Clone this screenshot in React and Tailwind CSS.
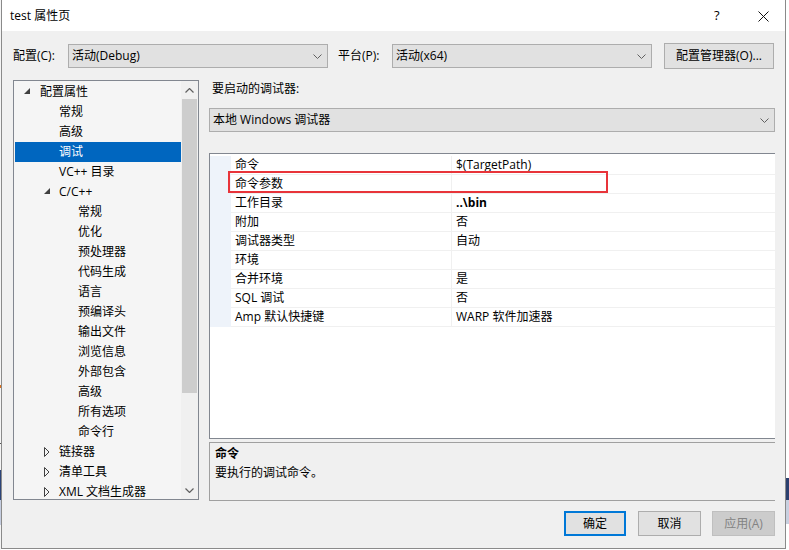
import React from "react";

const font = {
  fontFamily: '"Open Sans", "Noto Sans CJK SC", sans-serif',
};

const Chevron = ({ className = "" }) => (
  <svg width="9" height="5" viewBox="0 0 9 5" className={className}>
    <path d="M0.5 0.5 L4.5 4.5 L8.5 0.5" fill="none" stroke="#606060" strokeWidth="1" />
  </svg>
);

const Combo = ({ text, className = "" }) => (
  <div
    className={`h-[24px] bg-[#e1e1e1] border border-[#adadad] flex items-center pl-[3px] pr-[5px] ${className}`}
  >
    <span className="flex-1 text-[12px] leading-[22px] truncate">{text}</span>
    <Chevron />
  </div>
);

const Expanded = () => (
  <svg width="7" height="7" viewBox="0 0 7 7">
    <polygon points="6,0 6,6 0,6" fill="#404040" />
  </svg>
);

const Collapsed = () => (
  <svg width="6" height="10" viewBox="0 0 6 10">
    <polygon points="0.5,0.5 5,5 0.5,9.5" fill="none" stroke="#404040" strokeWidth="1" />
  </svg>
);

const treeItems = [
  { text: "配置属性", level: 0, arrow: "open" },
  { text: "常规", level: 1 },
  { text: "高级", level: 1 },
  { text: "调试", level: 1, selected: true },
  { text: "VC++ 目录", level: 1 },
  { text: "C/C++", level: 1, arrow: "open" },
  { text: "常规", level: 2 },
  { text: "优化", level: 2 },
  { text: "预处理器", level: 2 },
  { text: "代码生成", level: 2 },
  { text: "语言", level: 2 },
  { text: "预编译头", level: 2 },
  { text: "输出文件", level: 2 },
  { text: "浏览信息", level: 2 },
  { text: "外部包含", level: 2 },
  { text: "高级", level: 2 },
  { text: "所有选项", level: 2 },
  { text: "命令行", level: 2 },
  { text: "链接器", level: 1, arrow: "closed" },
  { text: "清单工具", level: 1, arrow: "closed" },
  { text: "XML 文档生成器", level: 1, arrow: "closed" },
];

const indent = ["pl-[25px]", "pl-[44px]", "pl-[63px]"];

const props = [
  ["命令", "$(TargetPath)"],
  ["命令参数", ""],
  ["工作目录", "..\\bin", true],
  ["附加", "否"],
  ["调试器类型", "自动"],
  ["环境", ""],
  ["合并环境", "是"],
  ["SQL 调试", "否"],
  ["Amp 默认快捷键", "WARP 软件加速器"],
];

function TreeRow({ item }) {
  return (
    <div
      className={`relative h-[20px] flex items-center text-[12px] leading-[20px] whitespace-nowrap ${indent[item.level]} ${
        item.selected ? "bg-[#0066bf] text-white" : "text-black"
      }`}
    >
      {item.arrow === "open" && (
        <span className={`absolute top-[6px] ${item.level === 0 ? "left-[9px]" : "left-[29px]"}`}>
          <Expanded />
        </span>
      )}
      {item.arrow === "closed" && (
        <span className="absolute top-[5px] left-[29px]">
          <Collapsed />
        </span>
      )}
      {item.text}
    </div>
  );
}

export default function App() {
  return (
    <div className="w-[789px] h-[550px] bg-white flex overflow-hidden text-black" style={font}>
      {/* desktop strip on the left */}
      <div className="w-[1px] h-full flex flex-col bg-[#f4f4f4]">
        <div className="h-[385px]" />
        <div className="h-[3px] bg-[#d9701e]" />
        <div className="h-[55px]" />
        <div className="h-[1px] bg-[#555]" />
        <div className="h-[26px]" />
        <div className="h-[30px] bg-[#2c4478]" />
        <div className="h-[25px] bg-[#c5cde0]" />
      </div>

      {/* dialog window */}
      <div className="w-[785px] h-[549px] border border-t-0 border-[#8a8a8a] flex flex-col bg-[#f0f0f0]">
        {/* title bar */}
        <div className="h-[31px] bg-white flex items-center relative">
          <span className="pl-[8px] text-[12px]">test 属性页</span>
          <span className="absolute left-[712px] top-[6px] text-[13px]">?</span>
          <svg className="absolute left-[756px] top-[11px]" width="11" height="11" viewBox="0 0 11 11">
            <path d="M0.5 0.5 L10.5 10.5 M10.5 0.5 L0.5 10.5" stroke="#111" strokeWidth="1" />
          </svg>
        </div>

        {/* configuration row */}
        <div className="mt-[12px] h-[26px] flex items-center pl-[11px] text-[12px]">
          <span className="w-[55px]">配置(C):</span>
          <Combo text="活动(Debug)" className="w-[260px]" />
          <span className="ml-[10px] w-[54px]">平台(P):</span>
          <Combo text="活动(x64)" className="w-[260px]" />
          <button className="ml-[12px] w-[110px] h-[26px] bg-[#e1e1e1] border border-[#adadad] text-[12px]">
            配置管理器(O)...
          </button>
        </div>

        {/* main area */}
        <div className="mt-[11px] flex pl-[11px]">
          {/* tree */}
          <div className="w-[186px] h-[420px] border border-[#828790] bg-[#f5f5f5] flex">
            <div className="w-[167px] pt-[1px] pl-[1px] overflow-hidden">
              {treeItems.map((item, i) => (
                <TreeRow key={i} item={item} />
              ))}
            </div>
            <div className="w-[17px] bg-[#f0f0f0] flex flex-col items-center">
              <div className="h-[18px] flex items-center justify-center">
                <svg width="9" height="5" viewBox="0 0 9 5">
                  <path d="M0.5 4.5 L4.5 0.5 L8.5 4.5" fill="none" stroke="#606060" strokeWidth="1.2" />
                </svg>
              </div>
              <div className="w-[15px] h-[294px] bg-[#cdcdcd]" />
              <div className="flex-1" />
              <div className="h-[18px] flex items-center justify-center">
                <svg width="9" height="5" viewBox="0 0 9 5">
                  <path d="M0.5 0.5 L4.5 4.5 L8.5 0.5" fill="none" stroke="#606060" strokeWidth="1.2" />
                </svg>
              </div>
            </div>
          </div>

          {/* right panel */}
          <div className="ml-[10px] w-[566px] flex flex-col">
            <div className="h-[18px] pl-[3px] text-[12px] leading-[18px]">要启动的调试器:</div>
            <Combo text="本地 Windows 调试器" className="mt-[10px] w-[566px]" />

            {/* property grid */}
            <div className="relative mt-[21px] h-[286px] border border-r-0 border-[#828790] bg-white pt-[2px]">
              {props.map(([name, value, bold], i) => (
                <div key={i} className="flex h-[19px] text-[12px] leading-[18px]">
                  <div className="w-[21px] bg-[#eef3fa]" />
                  <div className="flex-1 flex border-b border-[#f0f0f0]">
                    <div className="w-[221px] pl-[4px] border-r border-[#f0f0f0]">{name}</div>
                    <div className={`flex-1 pl-[4px] ${bold ? "font-bold" : ""}`}>{value}</div>
                  </div>
                </div>
              ))}
              <div className="absolute left-[18px] top-[17px] w-[380px] h-[22px] border-2 border-[#e8343a]" />
            </div>

            {/* description */}
            <div className="mt-[3px] h-[59px] border border-r-0 border-[#a0a0a0] pl-[5px] pt-[1px] text-[12px] leading-[19px]">
              <div className="font-bold">命令</div>
              <div>要执行的调试命令。</div>
            </div>
          </div>
        </div>

        {/* buttons */}
        <div className="mt-[10px] flex justify-end pr-[10px] text-[12px]">
          <button className="w-[62px] h-[25px] bg-[#e1e1e1] border-2 border-[#0078d7]">确定</button>
          <button className="ml-[12px] w-[63px] h-[25px] bg-[#e1e1e1] border border-[#adadad]">取消</button>
          <button className="ml-[11px] w-[63px] h-[25px] bg-[#cccccc] border border-[#bfbfbf] text-[#838383]">
            应用(A)
          </button>
        </div>
      </div>

      {/* desktop strip on the right */}
      <div className="flex-1 h-full flex flex-col bg-white">
        <div className="h-[478px]" />
        <div className="h-[22px] bg-[#2b3f6e]" />
        <div className="h-[24px] bg-[#c8d0e0]" />
      </div>
    </div>
  );
}
